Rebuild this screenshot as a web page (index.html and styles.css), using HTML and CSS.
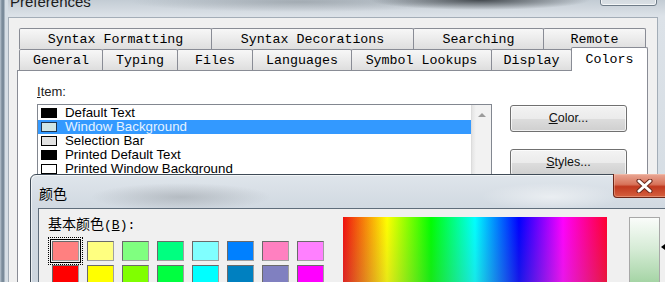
FILE: index.html
```html
<!DOCTYPE html>
<html lang="en">
<head>
    <meta charset="UTF-8">
    <title>Preferences</title>
    <link rel="stylesheet" href="styles.css">
</head>
<body>

    <div class="prefs">
        <div class="titlebar">
            <span class="title">Preferences</span>
            <span class="caption-btn"></span>
        </div>

        <div class="client">
            <!-- back row of tabs -->
            <div class="tab-row back">
                <div class="tab">Syntax Formatting</div>
                <div class="tab">Syntax Decorations</div>
                <div class="tab">Searching</div>
                <div class="tab">Remote</div>
            </div>
            <!-- front row, Colors selected -->
            <div class="tab-row front">
                <div class="tab">General</div>
                <div class="tab">Typing</div>
                <div class="tab">Files</div>
                <div class="tab">Languages</div>
                <div class="tab">Symbol Lookups</div>
                <div class="tab">Display</div>
                <div class="tab active">Colors</div>
            </div>

            <div class="tab-panel">
                <div class="item-label"><u>I</u>tem:</div>
                <div class="panel-body">
                    <div class="listbox">
                        <div class="items">
                            <div class="item"><span class="chip black"></span>Default Text</div>
                            <div class="item selected"><span class="chip window"></span>Window Background</div>
                            <div class="item"><span class="chip selbar"></span>Selection Bar</div>
                            <div class="item"><span class="chip black"></span>Printed Default Text</div>
                            <div class="item"><span class="chip white"></span>Printed Window Background</div>
                        </div>
                        <div class="scroll">
                            <span class="arrow-up"></span>
                        </div>
                    </div>
                    <div class="buttons">
                        <div class="btn"><u>C</u>olor...</div>
                        <div class="btn"><u>S</u>tyles...</div>
                    </div>
                </div>
            </div>
        </div>
    </div>

    <!-- Color picker dialog on top -->
    <div class="color-dialog">
        <div class="cd-titlebar">
            <span class="cd-title">颜色</span>
            <span class="close-btn">
                <svg width="17" height="14" viewBox="0 0 17 14">
                    <path d="M3 2 L14 12 M14 2 L3 12" stroke="#6a2a1e" stroke-width="5" stroke-linecap="round"/>
                    <path d="M3 2 L14 12 M14 2 L3 12" stroke="#fff" stroke-width="3" stroke-linecap="round"/>
                </svg>
            </span>
        </div>
        <div class="cd-client">
            <div class="basic">
                <div class="basic-label">基本颜色<span class="half">(<u>B</u>):</span></div>
                <div class="swatch-grid">
                    <span class="sw selected" style="background:#ff8080"></span>
                    <span class="sw" style="background:#ffff80"></span>
                    <span class="sw" style="background:#80ff80"></span>
                    <span class="sw" style="background:#00ff80"></span>
                    <span class="sw" style="background:#80ffff"></span>
                    <span class="sw" style="background:#0080ff"></span>
                    <span class="sw" style="background:#ff80c0"></span>
                    <span class="sw" style="background:#ff80ff"></span>
                    <span class="sw" style="background:#ff0000"></span>
                    <span class="sw" style="background:#ffff00"></span>
                    <span class="sw" style="background:#80ff00"></span>
                    <span class="sw" style="background:#00ff40"></span>
                    <span class="sw" style="background:#00ffff"></span>
                    <span class="sw" style="background:#0080c0"></span>
                    <span class="sw" style="background:#8080c0"></span>
                    <span class="sw" style="background:#ff00ff"></span>
                </div>
            </div>
            <div class="spectrum"></div>
            <div class="lum"></div>
            <span class="lum-pointer"></span>
        </div>
    </div>

</body>
</html>
```

FILE: styles.css
```css
* {
    box-sizing: border-box;
}

body {
    margin: 0;
    width: 665px;
    height: 282px;
    overflow: hidden;
    position: relative;
    font-family: "Liberation Sans", Arial, sans-serif;
    /* aero glass frame */
    background:
        radial-gradient(ellipse 110px 10px at 480px 0, rgba(45, 50, 55, 0.85), rgba(45, 50, 55, 0)),
        radial-gradient(ellipse 170px 10px at 300px 2px, rgba(120, 128, 135, 0.45), rgba(120, 128, 135, 0)),
        linear-gradient(to right, #b9c5d0 0, #7a8b9a 2px, #7a8b9a 4px, #d6dee5 5px, #d6dee5 8px, rgba(0, 0, 0, 0) 8px),
        linear-gradient(#c3ccd4, #dce2e8 16px, #d3dbe2);
}

.prefs {
    height: 282px;
    padding-left: 8px;
}

.titlebar {
    display: flex;
    height: 17px;
}

.title {
    font-size: 15px;
    line-height: 15px;
    margin: -6px 0 0 2px;
    color: #1b1b1b;
}

.caption-btn {
    margin: -10px 8px 0 auto;
    width: 57px;
    height: 16px;
    border: 1px solid #6f7c88;
    border-radius: 3px;
    background: rgba(255, 255, 255, 0.3);
    box-shadow: inset 0 0 0 1px rgba(255, 255, 255, 0.7);
}

.client {
    width: 650px;
    height: 265px;
    background: #f0f0f0;
    border: 1px solid #a3adb7;
    border-bottom: none;
    padding: 10px 0 0 8px;
}

/* Tabs */
.tab-row {
    display: flex;
    margin-left: 2px;
    height: 21px;
}

.tab {
    height: 21px;
    margin-right: -1px;
    padding-top: 2px;
    border: 1px solid #898c95;
    border-bottom: none;
    border-radius: 2px 2px 0 0;
    background: linear-gradient(#f7f7f7, #ebebeb 50%, #dedede);
    font-family: "Liberation Mono", "Courier New", monospace;
    font-size: 13.3px;
    line-height: 18px;
    text-align: center;
    color: #000;
    white-space: nowrap;
}

.back .tab:nth-child(1) { width: 193px; }
.back .tab:nth-child(2) { width: 203px; }
.back .tab:nth-child(3) { width: 131px; }
.back .tab:nth-child(4) { width: 103px; }

.front .tab:nth-child(1) { width: 84px; }
.front .tab:nth-child(2) { width: 76px; }
.front .tab:nth-child(3) { width: 76px; }
.front .tab:nth-child(4) { width: 100px; }
.front .tab:nth-child(5) { width: 141px; }
.front .tab:nth-child(6) { width: 81px; }

.tab.active {
    width: 77px;
    height: 24px;
    margin-top: -2px;
    padding-top: 2px;
    background: #fff;
    line-height: 20px;
    position: relative;
    z-index: 1;
}

.tab-panel {
    width: 631px;
    height: 220px;
    background: #fff;
    border: 1px solid #898c95;
    padding: 13px 0 0 19px;
}

.item-label {
    font-size: 13px;
    line-height: 15px;
    color: #222;
    margin-bottom: 5px;
}

.panel-body {
    display: flex;
    gap: 18px;
}

.listbox {
    width: 455px;
    height: 120px;
    border: 1px solid #828790;
    display: flex;
}

.items {
    flex: 1;
    padding-top: 1px;
}

.item {
    display: flex;
    align-items: flex-start;
    height: 14px;
    font-size: 13.3px;
    line-height: 14px;
    color: #000;
    white-space: nowrap;
}

.item.selected {
    background: #3399ff;
    color: #e6f3ff;
}

.chip {
    width: 16px;
    height: 10px;
    margin: 2px 8px 0 3px;
    border: 1px solid #000;
}

.chip.black { background: #000; }
.chip.window { background: #cfe6e6; border-color: #1d3550; }
.chip.selbar { background: #e2e2e2; }
.chip.white { background: #fff; }

.scroll {
    width: 20px;
    background: linear-gradient(to right, #e4e4e4, #f2f2f2 4px, #f2f2f2);
    border-left: 1px solid #dcdcdc;
    display: flex;
    justify-content: center;
}

.arrow-up {
    width: 0;
    height: 0;
    margin-top: 8px;
    border-left: 4px solid transparent;
    border-right: 4px solid transparent;
    border-bottom: 4px solid #9c9c9c;
}

.buttons {
    display: flex;
    flex-direction: column;
    gap: 17px;
    padding-top: 1px;
}

.btn {
    width: 117px;
    height: 27px;
    border: 1px solid #707070;
    border-radius: 3px;
    background: linear-gradient(#f3f3f3, #ebebeb 50%, #dddddd 51%, #cfcfcf);
    box-shadow: inset 0 0 0 1px rgba(255, 255, 255, 0.7);
    font-size: 12.5px;
    line-height: 25px;
    text-align: center;
    color: #111;
}

/* Color dialog */
.color-dialog {
    position: absolute;
    left: 30px;
    top: 174px;
    width: 650px;
    height: 120px;
    border: 1px solid #3f4b57;
    border-radius: 6px 0 0 0;
    background:
        radial-gradient(ellipse 90px 14px at 150px 22px, rgba(120, 125, 130, 0.35), rgba(120, 125, 130, 0)),
        radial-gradient(ellipse 70px 14px at 520px 22px, rgba(255, 255, 255, 0.5), rgba(255, 255, 255, 0)),
        linear-gradient(#dfe5eb, #d2dae2 30px, #cbd4dd);
    box-shadow: inset 1px 1px 0 rgba(255, 255, 255, 0.6);
}

.cd-titlebar {
    display: flex;
    height: 33px;
}

.cd-title {
    font-family: "Noto Sans CJK SC", sans-serif;
    font-size: 14px;
    line-height: 14px;
    margin: 11px 0 0 8px;
    color: #000;
}

.close-btn {
    margin: -1px 4px 0 auto;
    width: 62px;
    height: 24px;
    border: 1px solid #6b2518;
    border-top: none;
    border-radius: 0 0 0 4px;
    background: linear-gradient(#e9a795, #d8735a 45%, #c1391f 55%, #d5603f);
    box-shadow: inset 0 0 0 1px rgba(255, 220, 200, 0.35);
    display: flex;
    justify-content: center;
    align-items: center;
}

.cd-client {
    margin-left: 7px;
    height: 90px;
    background: #f0f0f0;
    border-top: 1px solid #5f6d7b;
    border-left: 1px solid #5f6d7b;
    padding: 6px 0 0 9px;
    display: flex;
    align-items: flex-start;
}

.basic {
    width: 295px;
}

.basic-label {
    font-family: "Noto Sans CJK SC", sans-serif;
    font-size: 14px;
    line-height: 16px;
    color: #000;
    white-space: nowrap;
}

.basic-label .half {
    font-family: "Liberation Mono", monospace;
    font-size: 13px;
}

.swatch-grid {
    display: grid;
    grid-template-columns: repeat(8, 27px);
    grid-auto-rows: 20px;
    column-gap: 8px;
    row-gap: 4px;
    margin: 7px 0 0 4px;
}

.sw {
    border: 1px solid;
    border-color: #6a6a6a #a0a0a0 #a0a0a0 #6a6a6a;
}

.sw.selected {
    box-shadow: 0 0 0 1px #f0f0f0, 0 0 0 2px #000;
    outline: 1px dotted #000;
    outline-offset: 3px;
}

.spectrum {
    width: 264px;
    height: 80px;
    margin-top: 2px;
    background:
        linear-gradient(rgba(128, 128, 128, 0), rgba(128, 128, 128, 0.18) 65px),
        linear-gradient(to right, #f01010, #ffff00, #00ff00, #00ffff, #0000ff, #ff00ff, #ff0030);
}

.lum {
    width: 31px;
    height: 80px;
    margin: 2px 0 0 22px;
    border: 1px solid #a8a8a8;
    background: linear-gradient(#fafcfa, #d7ecd7 30px, #a4d4a4 65px);
}

.lum-pointer {
    width: 0;
    height: 0;
    margin: 29px 0 0 1px;
    border-top: 3px solid transparent;
    border-bottom: 3px solid transparent;
    border-right: 4px solid #000;
}
```
